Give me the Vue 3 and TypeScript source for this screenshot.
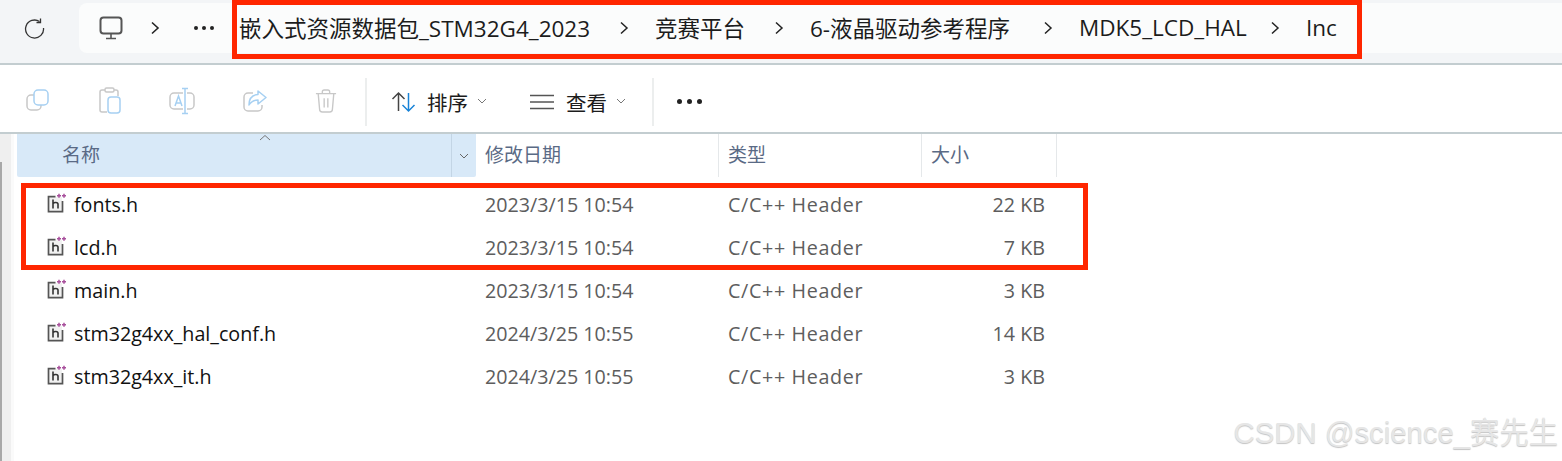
<script setup lang="ts">
const crumbs = [
  { text: '嵌入式资源数据包_STM32G4_2023', w: 416 },
  { text: '竞赛平台', w: 155 },
  { text: '6-液晶驱动参考程序', w: 269 },
  { text: 'MDK5_LCD_HAL', w: 227 },
  { text: 'Inc', w: 60 },
]
const files = [
  { name: 'fonts.h', date: '2023/3/15 10:54', size: '22 KB' },
  { name: 'lcd.h', date: '2023/3/15 10:54', size: '7 KB' },
  { name: 'main.h', date: '2023/3/15 10:54', size: '3 KB' },
  { name: 'stm32g4xx_hal_conf.h', date: '2024/3/25 10:55', size: '14 KB' },
  { name: 'stm32g4xx_it.h', date: '2024/3/25 10:55', size: '3 KB' },
]
</script>

<template>
  <div class="win">
    <div class="addr">
      <svg class="refresh" width="22" height="22" viewBox="0 0 22 22" fill="none" stroke="#333" stroke-width="1.3">
        <path d="M19.500 10A9 9 0 1 1 15.500 3.500" />
        <path d="M16.500 .5v4h-4" />
      </svg>
      <div class="bar">
        <svg class="pc" width="24" height="24" viewBox="0 0 24 24" fill="none" stroke="#555" stroke-width="2">
          <rect x="1.500" y="1.500" width="21" height="16" rx="3" />
          <path d="M7 22.500h10M12 18v4" stroke-width="1.600" />
        </svg>
        <svg class="chev first" width="12" height="14" viewBox="0 0 12 14" fill="none" stroke="#222" stroke-width="1.6"><path d="M3 1.500 9 7l-6 5.500" /></svg>
        <span class="dots"><b></b><b></b><b></b></span>
        <template v-for="(c, i) in crumbs" :key="c.text">
          <span class="crumb" :style="{ width: c.w + 'px' }">{{ c.text }}</span>
          <svg v-if="i < crumbs.length - 1" class="chev" width="12" height="14" viewBox="0 0 12 14" fill="none" stroke="#222" stroke-width="1.5"><path d="M3 1.500 9 7l-6 5.500" /></svg>
        </template>
      </div>
    </div>

    <div class="tools">
      <div class="disabled">
        <svg width="24" height="26" viewBox="0 0 24 26" fill="none" stroke-width="1.5">
          <rect x="1" y="7" width="14" height="15" rx="4" stroke="#c8c8c8" />
          <rect x="8" y="2" width="14" height="15" rx="4" fill="#fff" stroke="#a6d0f2" />
        </svg>
        <svg width="24" height="28" viewBox="0 0 24 28" fill="none" stroke-width="1.5">
          <path d="M7 3H4a2 2 0 0 0-2 2v18a2 2 0 0 0 2 2h5M16 3h2a2 2 0 0 1 2 2v4" stroke="#c8c8c8" />
          <rect x="7" y="1" width="9" height="4" rx="1.500" stroke="#c8c8c8" />
          <rect x="10" y="10" width="12" height="16" rx="3" stroke="#a6d0f2" />
        </svg>
        <svg width="26" height="28" viewBox="0 0 26 28" fill="none" stroke-width="1.5">
          <rect x="1" y="6" width="24" height="16" rx="4" stroke="#c8c8c8" />
          <rect x="14" y="2" width="4" height="24" fill="#fff" stroke="none" />
          <path d="M13 1.500h6M16 1.500v25M13 26.500h6" stroke="#a6d0f2" />
          <path d="M6 19l3.500-10 3.500 10M7.200 16h4.600" stroke="#a6d0f2" />
        </svg>
        <svg width="25" height="26" viewBox="0 0 25 26" fill="none" stroke-width="1.5">
          <path d="M10 5H5a4 4 0 0 0-4 4v10a4 4 0 0 0 4 4h10a4 4 0 0 0 4-4v-2" stroke="#c8c8c8" />
          <path d="M15 3l8 6.500-8 6.500v-4c-4 0-7 1.500-9 5 0-6 3-10 9-10.500z" stroke="#a6d0f2" stroke-linejoin="round" />
        </svg>
        <svg width="22" height="26" viewBox="0 0 24 26" fill="none" stroke="#c8c8c8" stroke-width="1.5">
          <path d="M1 5h22M8 5V3a2 2 0 0 1 2-2h4a2 2 0 0 1 2 2v2M3.500 5l1.500 17a3 3 0 0 0 3 3h8a3 3 0 0 0 3-3l1.500-17M10 10v10M14 10v10" />
        </svg>
      </div>
      <i class="sep first-sep"></i>
      <svg class="sort" width="26" height="22" viewBox="0 0 26 22" fill="none" stroke-width="1.5">
        <path d="M7.500 20V2M1.500 8l6-6 6 6" stroke="#444" />
        <path d="M17.500 2v18M11.500 14l6 6 6-6" stroke="#1883d7" />
      </svg>
      <span class="tool-text">排序</span>
      <svg class="mini" width="10" height="6" viewBox="0 0 10 6" fill="none" stroke="#777"><path d="M1 1l4 4 4-4" /></svg>
      <svg class="lines" width="24" height="16" viewBox="0 0 24 16" stroke="#555" stroke-width="1.3"><path d="M0 1.500h24M0 8h24M0 14.500h24" /></svg>
      <span class="tool-text view">查看</span>
      <svg class="mini" width="10" height="6" viewBox="0 0 10 6" fill="none" stroke="#777"><path d="M1 1l4 4 4-4" /></svg>
      <i class="sep second-sep"></i>
      <span class="more"><b></b><b></b><b></b></span>
    </div>

    <div class="list">
      <div class="side"><div class="thumb"></div></div>
      <div class="main">
        <div class="head">
          <div class="h-name">
            <span>名称</span>
            <svg class="sort-up" width="14" height="7" viewBox="0 0 14 7" fill="none" stroke="#777"><path d="M2 6l5-4.500L12 6" /></svg>
          </div>
          <div class="h-drop">
            <svg width="10" height="6" viewBox="0 0 10 6" fill="none" stroke="#666"><path d="M1 1l4 4 4-4" /></svg>
          </div>
          <div class="h-date">修改日期</div>
          <div class="h-type">类型</div>
          <div class="h-size">大小</div>
        </div>
        <div class="rows">
          <div v-for="f in files" :key="f.name" class="row">
            <div class="c-name">
              <svg class="file-icon" width="20" height="20" viewBox="0 0 20 20" fill="none">
                <rect x="2" y="4" width="13" height="14" fill="#f1f1f1" />
                <path d="M8.500 3.700H1.500v15h14V8" stroke="#555" stroke-width="1.700" />
                <path d="M6 6.500v9M6 10.500c1-1.500 5-1.500 5 .5v4.500" stroke="#333" stroke-width="1.600" />
                <path d="M10 2.700h4M12 .7v4M15 2.700h4M17 .7v4" stroke="#a8509c" stroke-width="1.500" />
              </svg>
              <span>{{ f.name }}</span>
            </div>
            <div class="c-date">{{ f.date }}</div>
            <div class="c-type">C/C++ Header</div>
            <div class="c-size">{{ f.size }}</div>
          </div>
        </div>
      </div>
    </div>

    <div class="mark mark-top"></div>
    <div class="mark mark-files"></div>
    <div class="watermark">CSDN @science_赛先生</div>
  </div>
</template>

<style>
html, body { margin: 0; background: #fff; }
</style>

<style scoped>
.win {
  position: relative;
  width: 1562px;
  height: 461px;
  overflow: hidden;
  background: #fff;
  font-family: "Open Sans", "Noto Sans CJK SC", sans-serif;
}
.addr {
  box-sizing: border-box;
  height: 65px;
  display: flex;
  padding: 3px 0 10px 24px;
  background: #f3f5f7;
  border-bottom: 2px solid #c3cdd0;
}
.refresh { margin: 15px 33px 0 0; }
.bar {
  flex: 1;
  display: flex;
  align-items: center;
  background: #fbfcfc;
  border-radius: 8px 0 0 8px;
  color: #1c1c1c;
  font-size: 22.5px;
  white-space: nowrap;
}
.pc { margin-left: 20px; }
.chev.first { margin-left: 26px; margin-right: 0; }
.dots { display: flex; gap: 4px; margin-left: 33px; width: 40px; }
.dots b { width: 4px; height: 4px; border-radius: 50%; background: #222; }
.crumb { display: block; padding: 0 0 2px 5px; box-sizing: border-box; }
.chev { flex: none; margin-left: -32px; margin-right: 20px; }
.tools {
  box-sizing: border-box;
  height: 69px;
  padding-top: 6px;
  display: flex;
  align-items: center;
  border-bottom: 2px solid #c3cdd0;
  color: #1c1c1c;
  font-size: 20.5px;
}
.disabled { display: flex; align-items: center; gap: 47.5px; margin-left: 26px; margin-top: -2px; }
.sep { width: 2px; height: 48px; background: #eceeee; }
.first-sep { margin-left: 28px; }
.sort { margin-left: 24px; }
.tool-text { margin-left: 10px; }
.mini { margin: -2px 0 0 9px; }
.lines { margin-left: 43px; }
.view { margin-left: 12px; }
.second-sep { margin-left: 26px; }
.more { display: flex; gap: 5px; margin-left: 23px; }
.more b { width: 5px; height: 5px; border-radius: 50%; background: #222; }
.list { display: flex; height: 327px; }
.side {
  box-sizing: border-box;
  width: 14px;
  padding-top: 28px;
  background: linear-gradient(to right, #efefef 11px, #fafafa 11px);
}
.thumb { width: 2px; height: 100%; background: #a8a8a8; }
.main { margin-left: 3px; flex: 1; }
.head {
  height: 43px;
  display: flex;
  color: #5a6a85;
  font-size: 19px;
  line-height: 43px;
}
.h-name {
  position: relative;
  box-sizing: border-box;
  width: 434px;
  padding-left: 45px;
  background: #d8e9f8;
  border-radius: 0 0 0 2px;
}
.sort-up { position: absolute; left: 241px; top: 0; }
.h-drop {
  box-sizing: border-box;
  width: 25px;
  display: flex;
  align-items: center;
  justify-content: center;
  background: #d8e9f8;
  border-left: 1px solid #c3d5e5;
  border-radius: 0 0 2px 0;
}
.h-date, .h-type, .h-size { box-sizing: border-box; border-right: 1px solid #e5e8ea; padding-left: 9px; }
.h-date { width: 243px; }
.h-type { width: 203px; }
.h-size { width: 135px; }
.rows { margin-top: 6px; }
.row {
  height: 43px;
  display: flex;
  align-items: center;
  font-size: 19.7px;
}
.c-name {
  width: 459px;
  display: flex;
  align-items: center;
  gap: 7px;
  padding-left: 30px;
  box-sizing: border-box;
  color: #111;
}
.file-icon { margin-top: -4px; }
.c-date, .c-type, .c-size { color: #5d5d5d; }
.c-date { width: 243px; padding-left: 9px; box-sizing: border-box; }
.c-type { width: 203px; padding-left: 9px; box-sizing: border-box; letter-spacing: .65px; }
.c-size { width: 123px; text-align: right; }
.mark {
  position: absolute;
  box-sizing: border-box;
  border: 5px solid #ff2600;
}
.mark-top { left: 232px; top: 0; width: 1130px; height: 59px; }
.mark-files { left: 21px; top: 183px; width: 1067px; height: 87px; }
.watermark {
  position: absolute;
  right: 4px;
  top: 415px;
  color: #e6e6e6;
  font-family: "Liberation Sans", "Noto Sans CJK SC", sans-serif;
  font-size: 29.3px;
  line-height: 36px;
  white-space: nowrap;
  text-shadow: 0 1px 1px #c4c4c4;
}
</style>
